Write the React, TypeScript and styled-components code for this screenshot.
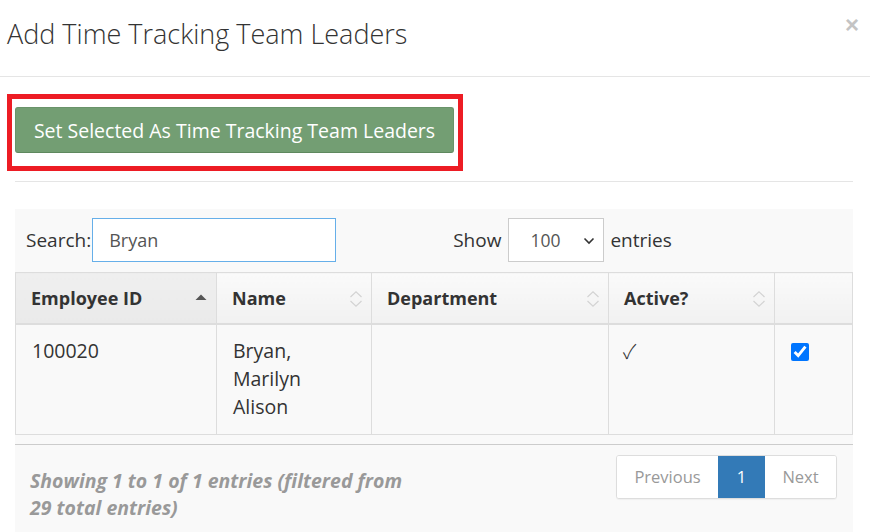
import React from "react";
import styled, { createGlobalStyle } from "styled-components";

const Global = createGlobalStyle`
  html, body { margin: 0; padding: 0; background: #fff; }
  body { font-family: "Open Sans", "Liberation Sans", sans-serif; color: #333; width: 870px; height: 532px; overflow: hidden; }
  * { box-sizing: border-box; }
`;

const Header = styled.div`
  display: flex;
  justify-content: space-between;
  align-items: flex-start;
  height: 77px;
  padding: 0 11px 0 7px;
  border-bottom: 1px solid #e5e5e5;
`;

const Title = styled.h4`
  margin: 14px 0 0;
  font-size: 27px;
  font-weight: 300;
  line-height: 40px;
  color: #333;
`;

const Close = styled.span`
  margin-top: 11px;
  font-size: 24px;
  font-weight: 700;
  line-height: 28px;
  color: #c4c4c4;
  font-family: "Liberation Sans", sans-serif;
`;

const RedBox = styled.div`
  margin: 17px 0 0 7px;
  width: 456px;
  height: 77px;
  border: 5px solid #ed1c24;
  padding: 8px 4px 0 3px;
`;

const GreenButton = styled.button`
  display: block;
  width: 439px;
  height: 46px;
  border: 1px solid #6a936a;
  border-bottom-color: #5e885e;
  border-radius: 3px;
  background: #739e73;
  color: #fff;
  font-family: "Open Sans", sans-serif;
  font-size: 19.5px;
  padding: 0;
  text-align: center;
`;

const Divider = styled.div`
  margin: 10px 0 0 15px;
  width: 838px;
  height: 1px;
  background: #e5e5e5;
`;

const Panel = styled.div`
  margin: 27px 0 0 15px;
  width: 838px;
  height: 330px;
  background: #f9f9f9;
`;

const Toolbar = styled.div`
  display: flex;
  align-items: center;
  height: 63px;
  padding: 9px 0 10px 11px;
  color: #333;
`;

const Label = styled.span`
  font-size: 19px;
`;

const SearchInput = styled.input`
  width: 244px;
  height: 44px;
  margin-left: 1px;
  border: 1px solid #66afe9;
  background: #fff;
  padding: 0 0 0 16px;
  font-family: "Open Sans", sans-serif;
  font-size: 18px;
  color: #555;
  outline: none;
`;

const ShowGroup = styled.div`
  display: flex;
  align-items: center;
  margin-left: 117px;
  gap: 6px;
`;

const SelectBox = styled.div`
  position: relative;
  width: 96px;
  height: 44px;
  margin-left: 1px;
  border: 1px solid #ccc;
  background: #fff;
  display: flex;
  align-items: center;
  padding-left: 21px;
  font-size: 17.5px;
  color: #555;
`;

const Chevron = styled.svg`
  position: absolute;
  right: 8px;
  top: 18px;
`;

const Table = styled.table`
  width: 837px;
  border-collapse: collapse;
  border: 1px solid #ddd;
  font-size: 18px;
  table-layout: fixed;
`;

const Th = styled.th<{ $sorted?: boolean; $w: number }>`
  width: ${(p) => p.$w}px;
  height: 51px;
  padding: 0 15px;
  text-align: left;
  font-weight: 700;
  color: #333;
  border: 1px solid #ddd;
  border-bottom: 2px solid #ddd;
  background: ${(p) => (p.$sorted ? "linear-gradient(#efefef, #eaeaea)" : "linear-gradient(#fafafa, #f1f1f1)")};
  position: relative;
`;

const SortIcon = styled.svg`
  position: absolute;
  right: 8px;
  top: 17px;
`;

const Td = styled.td`
  vertical-align: top;
  padding: 12px 10px 13px 16px;
  line-height: 28px;
  height: 107px;
  font-size: 19.5px;
  color: #333;
  border: 1px solid #ddd;
  background: #f9f9f9;
`;

const Tick = styled.span`
  font-family: "Noto Sans CJK JP", "DejaVu Sans", sans-serif;
  font-size: 20px;
  font-weight: 300;
  color: #333;
  margin-left: -2px;
`;

const Check = styled.input`
  width: 18px;
  height: 18px;
  margin: 6px 0 0 0;
  accent-color: #0075ff;
`;

const Footer = styled.div`
  margin-top: 9px;
  border-top: 1px solid #ccc;
  display: flex;
  justify-content: space-between;
  align-items: flex-start;
  padding: 0 16px 0 15px;
`;

const Info = styled.div`
  width: 388px;
  margin-top: 22px;
  font-size: 19.5px;
  line-height: 27px;
  font-weight: 700;
  font-style: italic;
  color: #999;
`;

const Pager = styled.div`
  display: flex;
  margin-top: 10px;
  border: 1px solid #ddd;
  border-radius: 3px;
  background: #fff;
  overflow: hidden;
  box-shadow: 0 1px 1px rgba(0,0,0,0.04);
`;

const PageBtn = styled.span<{ $active?: boolean; $w: number }>`
  width: ${(p) => p.$w}px;
  height: 42px;
  display: flex;
  align-items: center;
  justify-content: center;
  font-size: 16.5px;
  color: ${(p) => (p.$active ? "#fff" : "#999")};
  background: ${(p) => (p.$active ? "#337ab7" : "#fff")};
`;

const Both = () => (
  <SortIcon width="14" height="18" viewBox="0 0 14 18">
    <path d="M1.5 7 L7 1.8 L12.5 7" fill="none" stroke="#d3d3d3" strokeWidth="1.2" />
    <path d="M1.5 11 L7 16.2 L12.5 11" fill="none" stroke="#d3d3d3" strokeWidth="1.2" />
  </SortIcon>
);

const Asc = () => (
  <SortIcon width="14" height="18" viewBox="0 0 14 18">
    <path d="M1.5 10 L7 4.5 L12.5 10 Z" fill="#555" />
  </SortIcon>
);

export default function App() {
  return (
    <>
      <Global />
      <Header>
        <Title>Add Time Tracking Team Leaders</Title>
        <Close>×</Close>
      </Header>
      <RedBox>
        <GreenButton>Set Selected As Time Tracking Team Leaders</GreenButton>
      </RedBox>
      <Divider />
      <Panel>
        <Toolbar>
          <Label>Search:</Label>
          <SearchInput defaultValue="Bryan" />
          <ShowGroup>
            <Label>Show</Label>
            <SelectBox>
              100
              <Chevron width="12" height="8" viewBox="0 0 12 8">
                <path d="M1.5 1.5 L6 6 L10.5 1.5" fill="none" stroke="#333" strokeWidth="1.6" />
              </Chevron>
            </SelectBox>
            <Label>entries</Label>
          </ShowGroup>
        </Toolbar>
        <Table>
          <thead>
            <tr>
              <Th $w={201} $sorted>Employee ID<Asc /></Th>
              <Th $w={155}>Name<Both /></Th>
              <Th $w={237}>Department<Both /></Th>
              <Th $w={166}>Active?<Both /></Th>
              <Th $w={78}></Th>
            </tr>
          </thead>
          <tbody>
            <tr>
              <Td>100020</Td>
              <Td>Bryan,<br />Marilyn<br />Alison</Td>
              <Td></Td>
              <Td><Tick>✓</Tick></Td>
              <Td><Check type="checkbox" defaultChecked /></Td>
            </tr>
          </tbody>
        </Table>
        <Footer>
          <Info>Showing 1 to 1 of 1 entries (filtered from 29 total entries)</Info>
          <Pager>
            <PageBtn $w={101}>Previous</PageBtn>
            <PageBtn $w={47} $active>1</PageBtn>
            <PageBtn $w={71}>Next</PageBtn>
          </Pager>
        </Footer>
      </Panel>
    </>
  );
}
